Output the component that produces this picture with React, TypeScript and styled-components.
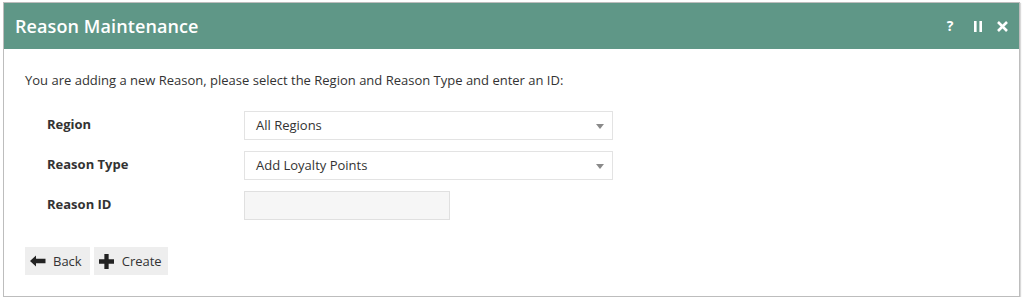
import React from 'react'
import styled, { createGlobalStyle } from 'styled-components'

const GlobalStyle = createGlobalStyle`
  html, body {
    margin: 0;
    padding: 0;
    background: #ffffff;
  }
  body {
    font-family: 'Open Sans', 'Liberation Sans', Arial, sans-serif;
    color: #333333;
  }
`

const Page = styled.div`
  padding: 2px 0 0 3px;
`

const Panel = styled.div`
  width: 1017px;
  height: 295px;
  box-sizing: border-box;
  border: 1px solid #bdbdbd;
  box-shadow: 1px 1px 1px rgba(0, 0, 0, 0.15);
  display: flex;
  flex-direction: column;
  background: #ffffff;
`

const Header = styled.div`
  height: 46px;
  flex: none;
  background: #5f9787;
  display: flex;
  align-items: center;
  justify-content: space-between;
  padding: 0 11px 0 11px;
`

const Title = styled.h1`
  margin: 0;
  font-size: 18px;
  font-weight: 600;
  color: #ffffff;
  letter-spacing: 0.1px;
`

const HeaderTools = styled.div`
  display: flex;
  align-items: center;
  gap: 12px;
`

const ToolButton = styled.button<{ $space?: number }>`
  border: none;
  background: none;
  padding: 0;
  margin-right: ${(p) => p.$space ?? 0}px;
  color: #ffffff;
  font-family: inherit;
  font-size: 14px;
  font-weight: 700;
  line-height: 1;
  display: flex;
  align-items: center;
  justify-content: center;
  width: 12px;
  height: 14px;
  cursor: pointer;
`

const Body = styled.div`
  padding: 22px 21px;
  display: flex;
  flex-direction: column;
`

const Intro = styled.p`
  margin: 0;
  font-size: 13px;
  line-height: 18px;
  color: #333333;
`

const Form = styled.div`
  display: flex;
  flex-direction: column;
  gap: 11px;
  margin: 22px 0 0 22px;
`

const Row = styled.div`
  display: flex;
  align-items: center;
`

const Label = styled.label`
  width: 197px;
  font-size: 13px;
  font-weight: 700;
  color: #333333;
  margin-top: -4px;
`

const Select = styled.div`
  position: relative;
  width: 369px;
  height: 29px;
  box-sizing: border-box;
  border: 1px solid #e3e3e3;
  background: #ffffff;
  display: flex;
  align-items: center;
  padding: 0 0 1px 11px;
  font-size: 13px;
  color: #333333;
`

const Caret = styled.span`
  position: absolute;
  right: 8px;
  top: 12px;
  width: 0;
  height: 0;
  border-left: 4px solid transparent;
  border-right: 4px solid transparent;
  border-top: 5px solid #8a8a8a;
`

const TextInput = styled.input`
  width: 206px;
  height: 29px;
  box-sizing: border-box;
  border: 1px solid #e0e0e0;
  background: #f6f6f6;
  outline: none;
  padding: 0 8px;
  font-family: inherit;
  font-size: 13px;
`

const Actions = styled.div`
  display: flex;
  gap: 4px;
  margin-top: 27px;
`

const ActionButton = styled.button<{ $right: number; $gap: number }>`
  height: 28px;
  border: none;
  background: #eeeeee;
  display: flex;
  align-items: center;
  gap: ${(p) => p.$gap}px;
  padding: 0 ${(p) => p.$right}px 0 5px;
  font-family: inherit;
  font-size: 13px;
  color: #333333;
  cursor: pointer;
`

const ArrowLeftIcon = () => (
  <svg width="16" height="12" viewBox="0 0 16 12">
    <path d="M0 6 L6 0.5 L6 3.8 L15.5 3.8 L15.5 8.2 L6 8.2 L6 11.5 Z" fill="#222" />
  </svg>
)

const PlusIcon = () => (
  <svg width="15" height="15" viewBox="0 0 14 14">
    <path d="M5 0 H9 V5 H14 V9 H9 V14 H5 V9 H0 V5 H5 Z" fill="#222" />
  </svg>
)

const PauseIcon = () => (
  <svg width="8" height="11" viewBox="0 0 8 11">
    <rect x="0" y="0" width="2.6" height="11" fill="#fff" />
    <rect x="5.4" y="0" width="2.6" height="11" fill="#fff" />
  </svg>
)

const CloseIcon = () => (
  <svg width="11" height="11" viewBox="0 0 11 11">
    <path d="M1 1 L10 10 M10 1 L1 10" stroke="#fff" strokeWidth="2.6" />
  </svg>
)

const App: React.FC = () => {
  return (
    <Page>
      <GlobalStyle />
      <Panel>
        <Header>
          <Title>Reason Maintenance</Title>
          <HeaderTools>
            <ToolButton $space={4}>?</ToolButton>
            <ToolButton>
              <PauseIcon />
            </ToolButton>
            <ToolButton>
              <CloseIcon />
            </ToolButton>
          </HeaderTools>
        </Header>
        <Body>
          <Intro>
            You are adding a new Reason, please select the Region and Reason
            Type and enter an ID:
          </Intro>
          <Form>
            <Row>
              <Label>Region</Label>
              <Select>
                All Regions
                <Caret />
              </Select>
            </Row>
            <Row>
              <Label>Reason Type</Label>
              <Select>
                Add Loyalty Points
                <Caret />
              </Select>
            </Row>
            <Row>
              <Label>Reason ID</Label>
              <TextInput />
            </Row>
          </Form>
          <Actions>
            <ActionButton $right={8} $gap={7}>
              <ArrowLeftIcon />
              Back
            </ActionButton>
            <ActionButton $right={6} $gap={8}>
              <PlusIcon />
              Create
            </ActionButton>
          </Actions>
        </Body>
      </Panel>
    </Page>
  )
}

export default App
